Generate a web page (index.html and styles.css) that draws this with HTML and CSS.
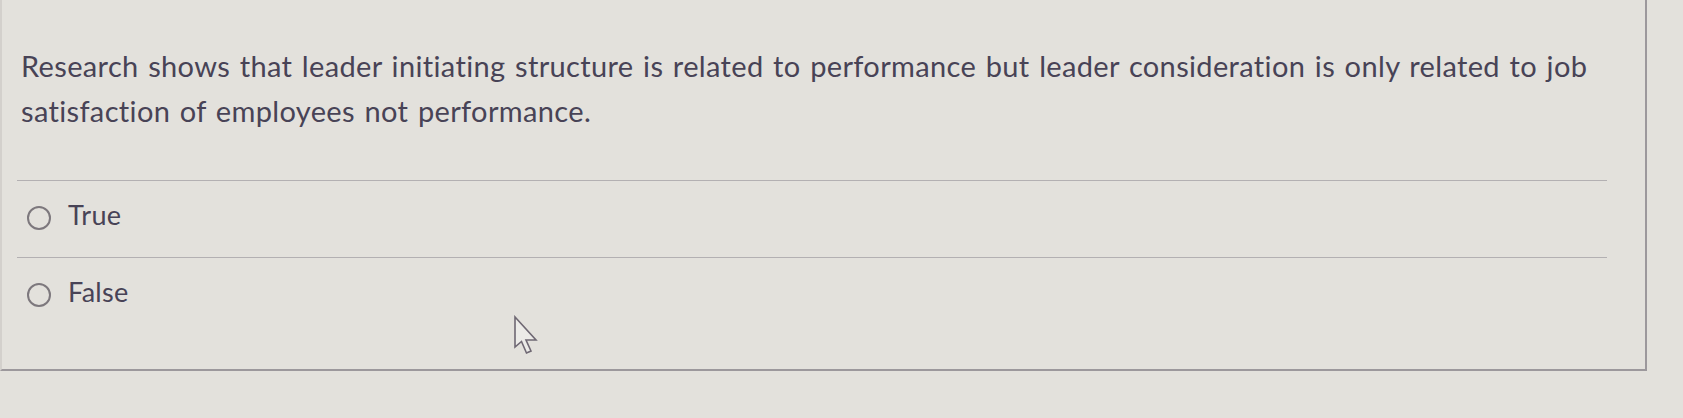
FILE: index.html
```html
<!DOCTYPE html>
<html lang="en">
<head>
<meta charset="utf-8">
<title>Question</title>
<link rel="stylesheet" href="styles.css">
</head>
<body>
<div class="card">
  <p class="question">Research shows that leader initiating structure is related to performance but leader consideration is only related to job satisfaction of employees not performance.</p>
  <ul class="options">
    <li class="option"><span class="radio"></span><span class="label">True</span></li>
    <li class="option"><span class="radio"></span><span class="label">False</span></li>
  </ul>
</div>
<svg class="cursor" width="30" height="44" viewBox="0 0 30 44">
  <path d="M2 2 L2 32 L8.5 26.5 L13.5 38 L18 36 L13 25 L23 25 Z" fill="#ecebe8" stroke="#6f6873" stroke-width="1.6" stroke-linejoin="miter"/>
</svg>
</body>
</html>
```

FILE: styles.css
```css
html, body {
  margin: 0;
  padding: 0;
}

body {
  background: #e3e1dc;
  width: 1683px;
  height: 418px;
  overflow: hidden;
  position: relative;
  font-family: Lato, "Open Sans", sans-serif;
  color: #484356;
}

.card {
  box-sizing: border-box;
  width: 1647px;
  height: 371px;
  border-right: 2px solid #9c989c;
  border-bottom: 2px solid #9c989c;
  border-left: 2px solid #d3d0cc;
  padding: 43px 38px 0 15px;
}

.question {
  margin: 0 0 0 4px;
  font-size: 29px;
  line-height: 45px;
  letter-spacing: 0.35px;
  word-spacing: 1.8px;
  max-width: 1600px;
}

.options {
  list-style: none;
  margin: 47px 0 0 0;
  padding: 0;
}

.option {
  display: flex;
  align-items: center;
  height: 76px;
  border-top: 1px solid #b3b0b2;
}

.option .radio,
.option .label {
  position: relative;
  top: -5px;
}

.radio {
  box-sizing: border-box;
  width: 24px;
  height: 24px;
  border: 2px solid #7d787d;
  border-radius: 50%;
  margin-left: 10px;
  margin-right: 17px;
  margin-top: 7px;
  flex: none;
}

.label {
  font-size: 27px;
  line-height: 31px;
  letter-spacing: 0.3px;
}

.cursor {
  position: absolute;
  left: 513px;
  top: 315px;
}
```
